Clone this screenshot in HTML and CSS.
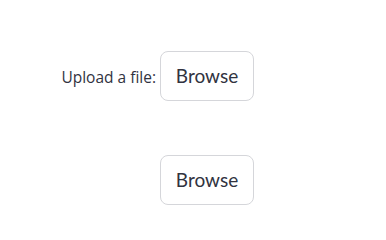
FILE: index.html
```html
<!DOCTYPE html>
<html>
<head>
<meta charset="utf-8">
<link rel="stylesheet" href="styles.css">
</head>
<body>
<div class="form">
  <label class="label" for="f1">Upload a file:</label>
  <button class="browse" id="f1" type="button">Browse</button>
  <span class="label"></span>
  <button class="browse" type="button">Browse</button>
</div>
</body>
</html>
```
FILE: styles.css
```css
html, body {
  margin: 0;
  padding: 0;
  background: #ffffff;
}
body {
  font-family: "Lato", "Open Sans", sans-serif;
  color: #31333f;
}
.form {
  display: grid;
  grid-template-columns: 160px auto;
  justify-content: start;
  row-gap: 54px;
  padding-top: 51px;
}
.label {
  justify-self: end;
  align-self: center;
  padding-right: 4px;
  padding-top: 1px;
  font-family: "Open Sans", sans-serif;
  font-size: 15.5px;
  color: #31333f;
}
.browse {
  box-sizing: border-box;
  width: 94px;
  height: 50px;
  background: #ffffff;
  border: 1px solid #d5d6da;
  border-radius: 8px;
  font-family: "Lato", sans-serif;
  font-size: 19px;
  color: #31333f;
  padding: 0 0 1px;
}
```
